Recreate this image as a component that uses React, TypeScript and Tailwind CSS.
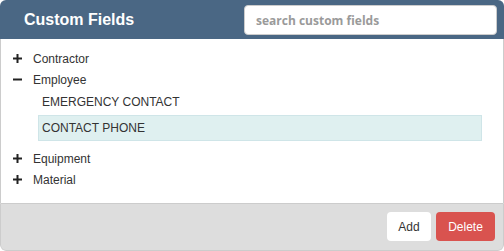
import React from 'react';

const Plus = () => (
  <svg width="9" height="9" viewBox="0 0 9 9" className="shrink-0">
    <rect x="0" y="3.5" width="9" height="2" fill="#222" />
    <rect x="3.5" y="0" width="2" height="9" fill="#222" />
  </svg>
);

const Minus = () => (
  <svg width="9" height="9" viewBox="0 0 9 9" className="shrink-0">
    <rect x="0" y="3.5" width="9" height="2" fill="#222" />
  </svg>
);

const TreeRow: React.FC<{ label: string; open?: boolean }> = ({ label, open }) => (
  <div className="h-[21px] flex items-center pl-[12px] gap-[11px]">
    {open ? <Minus /> : <Plus />}
    <span>{label}</span>
  </div>
);

export default function App() {
  return (
    <div className="w-[504px] h-[251px] flex flex-col rounded-[6px] overflow-hidden text-[12px] text-[#333] font-['Liberation_Sans',Arial,sans-serif]">
      <div className="h-[39px] shrink-0 bg-[#4a6784] flex items-center justify-between pl-[24px] pr-[7px]">
        <span className="text-white font-bold text-[16px]">Custom Fields</span>
        <input
          placeholder="search custom fields"
          className="w-[253px] h-[30px] mt-[1px] rounded-[4px] bg-white border border-[#ccc] px-[11px] text-[12px] font-bold font-['Open_Sans',sans-serif] placeholder:text-[#9a9a9a] outline-none"
        />
      </div>
      <div className="flex-1 bg-white border-x border-[#ccc] pt-[9px]">
        <TreeRow label="Contractor" />
        <TreeRow label="Employee" open />
        <div className="ml-[37px] w-[444px]">
          <div className="h-[24px] flex items-center pl-[4px]">EMERGENCY CONTACT</div>
          <div className="mt-[1px] h-[26px] flex items-center pl-[3px] bg-[#dff0f0] border border-[#cfe5e8]">
            CONTACT PHONE
          </div>
        </div>
        <div className="mt-[7px]">
          <TreeRow label="Equipment" />
          <TreeRow label="Material" />
        </div>
      </div>
      <div className="h-[48px] shrink-0 bg-[#dddddd] border border-[#cccccc] rounded-b-[6px] flex items-center justify-end gap-[5px] pr-[8px] pb-[1px]">
        <button className="w-[44px] h-[29px] rounded-[4px] bg-white text-[#333] text-[12px]">Add</button>
        <button className="w-[59px] h-[29px] rounded-[4px] bg-[#d9534f] text-white text-[12px]">Delete</button>
      </div>
    </div>
  );
}
